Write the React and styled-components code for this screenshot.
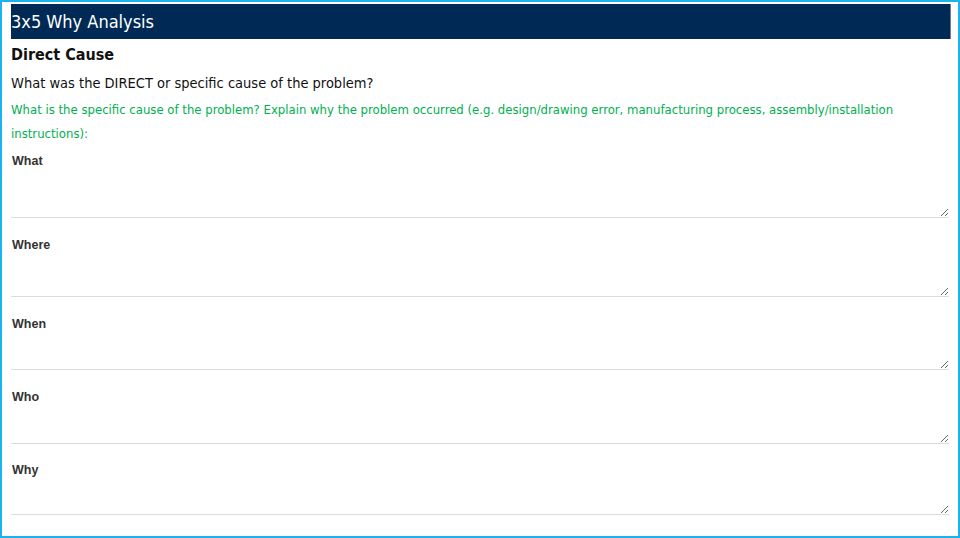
import React from "react";
import styled, { createGlobalStyle } from "styled-components";

const Global = createGlobalStyle`
  html, body { margin: 0; padding: 0; background: #fff; }
  * { box-sizing: border-box; }
`;

const Frame = styled.div`
  width: 960px;
  height: 538px;
  border: 2px solid #1ab3f0;
  padding: 2px 7px 0 9px;
  overflow: hidden;
  font-family: "DejaVu Sans Condensed", "DejaVu Sans", sans-serif;
`;

const Header = styled.div`
  height: 35px;
  background: #002a55;
  color: #fff;
  font-size: 18px;
  line-height: 35px;
  border-right: 1px solid #6c7f95;
`;

const SectionTitle = styled.div`
  margin-top: 6px;
  font-size: 16px;
  font-weight: bold;
  line-height: 20px;
  color: #111;
`;

const Question = styled.div`
  margin-top: 9px;
  font-size: 14.5px;
  line-height: 18px;
  color: #111;
`;

const Hint = styled.div`
  margin-top: 6px;
  font-size: 13px;
  line-height: 24px;
  color: #00b050;
`;

const Field = styled.div`
  display: flex;
  flex-direction: column;
  margin-top: ${(p) => p.$gap}px;
`;

const Label = styled.label`
  padding-left: 1px;
  font-family: "Liberation Sans", Arial, sans-serif;
  font-size: 12.5px;
  font-weight: bold;
  line-height: 14px;
  color: #333;
`;

const Area = styled.textarea`
  display: block;
  width: 938px;
  height: ${(p) => p.$h}px;
  border: none;
  border-bottom: 1px solid #dcdcdc;
  outline: none;
  resize: vertical;
  padding: 2px;
  font-family: "Liberation Sans", Arial, sans-serif;
  font-size: 13px;
  background: #fff;
`;

const fields = [
  { name: "What", gap: 8, h: 50 },
  { name: "Where", gap: 20, h: 45 },
  { name: "When", gap: 20, h: 39 },
  { name: "Who", gap: 20, h: 40 },
  { name: "Why", gap: 19, h: 38 },
];

export default function App() {
  return (
    <>
      <Global />
      <Frame>
        <Header>3x5 Why Analysis</Header>
        <SectionTitle>Direct Cause</SectionTitle>
        <Question>What was the DIRECT or specific cause of the problem?</Question>
        <Hint>
          What is the specific cause of the problem? Explain why the problem
          occurred (e.g. design/drawing error, manufacturing process,
          assembly/installation instructions):
        </Hint>
        {fields.map((f) => (
          <Field key={f.name} $gap={f.gap}>
            <Label>{f.name}</Label>
            <Area $h={f.h} />
          </Field>
        ))}
      </Frame>
    </>
  );
}
